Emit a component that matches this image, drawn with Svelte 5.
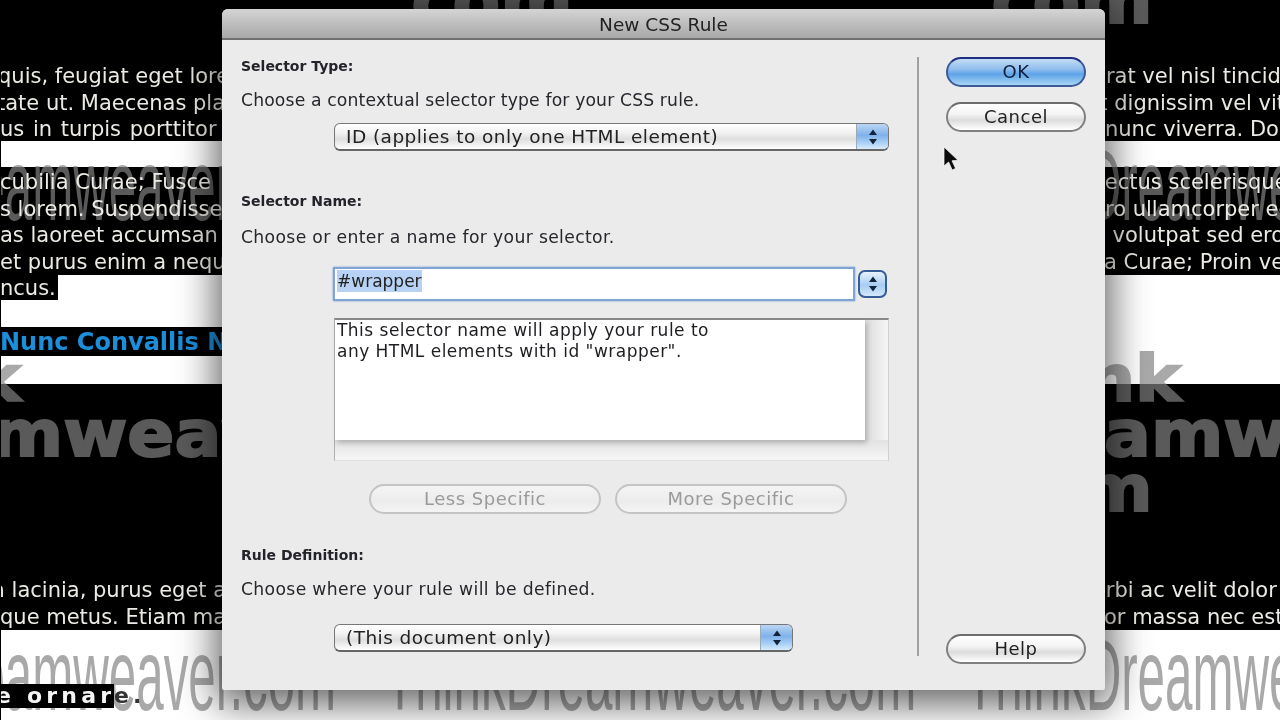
<script>
  const top1 = [
    { l: 'quis, feugiat eget lorem', li: -2, r: 'erat vel nisl tincidunt', rx: 1093 },
    { l: 'tate ut. Maecenas placerat', li: -3, r: 'ut dignissim vel vitae', rx: 1086 },
    { l: 'us in turpis porttitor sed', li: 0, r: 'nunc viverra. Donec', rx: 1105, ws: 2 }
  ];
  const top2 = [
    { l: 'cubilia Curae; Fusce', li: 0, r: 'lectus scelerisque', rx: 1099 },
    { l: 's lorem. Suspendisse', li: 0, r: 'ro ullamcorper eget', rx: 1105 },
    { l: 'as laoreet accumsan', li: 0, r: 'a volutpat sed eros', rx: 1093 },
    { l: 'et purus enim a neque', li: 0, r: 'a Curae; Proin vel', rx: 1104 }
  ];
  const low = [
    { l: 'a lacinia, purus eget ante', li: -8, r: 'orbi ac velit dolor', rx: 1093 },
    { l: 'que metus. Etiam magna', li: 0, r: 'or massa nec est', rx: 1104 }
  ];
  const tiles = [0, 1, 2];
  const thinTiles = [0, 1, 2];
</script>

{#snippet textLine(row)}
  <div class="line">
    <span class="ltext" style:text-indent="{row.li}px" style:word-spacing="{row.ws ?? 0}px">{row.l}</span>
    <span class="rtext" style:left="{row.rx}px">{row.r}</span>
  </div>
{/snippet}

{#snippet chevrons()}
  <svg width="12" height="18" viewBox="0 0 12 18" aria-hidden="true">
    <path d="M6 1.5 L10 7 H2 Z M6 16.5 L10 11 H2 Z" fill="#14233c" />
  </svg>
{/snippet}

{#snippet select(text, cls)}
  <div class="select {cls}">
    <span class="select-text">{text}</span>
    <span class="cap">{@render chevrons()}</span>
  </div>
{/snippet}

<div class="page">
  <section class="band black h141">
    {#each top1 as row}{@render textLine(row)}{/each}
  </section>
  <section class="band white h26"></section>
  <section class="band black lines4">
    {#each top2 as row}{@render textLine(row)}{/each}
  </section>
  <section class="band white h25">
    <span class="mark">ncus.</span>
  </section>
  <section class="band white h27"></section>
  <section class="band white h29">
    <h2 class="heading">Nunc Convallis Nulla</h2>
  </section>
  <section class="band white h28"></section>
  <section class="band black h246">
    <div class="low-text">
      {#each low as row}{@render textLine(row)}{/each}
    </div>
  </section>
  <section class="band white rest">
    <span class="ornare"><span class="ornare-hl">e ornar</span>e.</span>
  </section>

  <div class="wm bold wm-top">
    {#each tiles as t}<div class="tile"><div>.com</div></div>{/each}
  </div>
  <div class="wm bold wm-mid">
    {#each tiles as t}<div class="tile"><div>Think</div><div>Dreamweaver</div><div>.com</div></div>{/each}
  </div>
  <div class="wm thin wm-a">
    {#each thinTiles as t}<span class="thin-tile">ThinkDreamweaver.com</span>{/each}
  </div>
  <div class="wm thin wm-b">
    {#each thinTiles as t}<span class="thin-tile">ThinkDreamweaver.com</span>{/each}
  </div>

  <div class="dialog">
    <header class="title">New CSS Rule</header>
    <div class="body">
      <div class="main">
        <h3 class="label first">Selector Type:</h3>
        <p class="hint h1">Choose a contextual selector type for your CSS rule.</p>
        <div class="indent">
          {@render select('ID (applies to only one HTML element)', 'wide')}
        </div>

        <h3 class="label second">Selector Name:</h3>
        <p class="hint h2b">Choose or enter a name for your selector.</p>
        <div class="indent combo">
          <div class="input"><span class="sel">#wrapper</span></div>
          <div class="spin">{@render chevrons()}</div>
        </div>

        <div class="indent">
          <div class="desc">
            <div class="desc-top">
              <div class="desc-text">This selector name will apply your rule to<br />any HTML elements with id "wrapper".</div>
              <div class="track"></div>
            </div>
            <div class="hbar"></div>
          </div>
        </div>

        <div class="spec">
          <div class="btn disabled">Less Specific</div>
          <div class="btn disabled">More Specific</div>
        </div>

        <h3 class="label third">Rule Definition:</h3>
        <p class="hint h3b">Choose where your rule will be defined.</p>
        <div class="indent">
          {@render select('(This document only)', 'narrow')}
        </div>
      </div>

      <div class="side">
        <div class="btn primary">OK</div>
        <div class="btn cancel">Cancel</div>
        <div class="btn help">Help</div>
      </div>
    </div>
  </div>

  <svg class="cursor" width="22" height="30" viewBox="0 0 22 30" aria-hidden="true">
    <path d="M3 2 L3 21 L7.6 17 L11.2 25 L14.6 23.4 L11 15.8 L17 15.2 Z" fill="#0c0c0c" stroke="#fff" stroke-width="1" stroke-opacity=".7" />
  </svg>
</div>

<style>
  :global(body) { margin: 0; background: #000; }
  .page {
    position: relative;
    width: 1280px;
    height: 720px;
    overflow: hidden;
    font-family: "DejaVu Sans", sans-serif;
    background: #fff;
    filter: blur(.4px);
  }
  .page::before {
    content: "";
    position: absolute;
    left: 0; top: 0; bottom: 0;
    width: 1px;
    background: #000;
    z-index: 4;
  }
  .band { width: 100%; box-sizing: border-box; }
  .black { background: #000; }
  .white { background: #fff; }
  .h141 { height: 141px; padding-top: 63px; }
  .h26 { height: 26px; }
  .lines4 { height: 108px; padding-top: 2px; }
  .h25 { height: 25px; }
  .h27 { height: 27px; }
  .h29 { height: 29px; }
  .h28 { height: 28px; }
  .h246 { height: 246px; display: flex; flex-direction: column; justify-content: flex-end; }
  .rest { height: 90px; padding-top: 54px; }

  .line {
    position: relative;
    height: 26.5px;
    line-height: 27.5px;
    font-size: 21px;
    color: #eceae4;
    white-space: nowrap;
  }
  .ltext, .rtext { position: relative; z-index: 2; }
  .ltext { display: block; width: 240px; overflow: hidden; }
  .rtext { position: absolute; top: 0; }
  .mark {
    display: inline-block;
    position: relative;
    z-index: 2;
    background: #000;
    color: #eceae4;
    height: 25px;
    line-height: 26px;
    font-size: 21px;
    width: 58px;
    overflow: hidden;
  }
  .heading {
    margin: 0;
    height: 29px;
    line-height: 30px;
    width: 300px;
    background: #000;
    color: #1b8fdc;
    font-size: 24px;
    font-weight: 700;
    white-space: nowrap;
    position: relative;
    z-index: 2;
  }
  .ornare {
    position: relative;
    z-index: 2;
    display: block;
    width: 150px;
    height: 24px;
    line-height: 24px;
    font-size: 22px;
    font-weight: 700;
    letter-spacing: 4.2px;
    color: #333;
    white-space: nowrap;
  }
  .ornare-hl { display: inline-block; background: #000; color: #f4f4f4; width: 114px; overflow: hidden; text-indent: -4px; vertical-align: top; }

  .wm { position: absolute; z-index: 1; white-space: nowrap; color: #838383; opacity: .69; }
  .bold {
    display: flex;
    left: -195px;
    font-weight: 700;
    font-size: 64px;
    line-height: 55px;
    -webkit-text-stroke: 2px #838383;
    transform: scaleX(1.085);
    transform-origin: 0 0;
  }
  .tile { flex: 0 0 534.6px; }
  .wm-top { top: -26px; }
  .wm-mid { top: 352px; }
  .thin {
    left: -195px;
    font-family: "Liberation Sans", sans-serif;
    font-size: 102px;
    line-height: 102px;
    transform: scaleX(.483);
    transform-origin: 0 0;
    display: flex;
  }
  .thin-tile { flex: 0 0 1201px; }
  .wm-a { top: 134px; }
  .wm-b { top: 624px; }

  .dialog {
    position: absolute;
    z-index: 3;
    left: 222px;
    top: 9px;
    width: 883px;
    height: 681px;
    background: #ebebeb;
    border-radius: 6px 6px 2px 2px;
    box-shadow: 0 8px 38px 6px rgba(0, 0, 0, .62);
    display: flex;
    flex-direction: column;
    color: #1d1d22;
  }
  .title {
    height: 29px;
    line-height: 31px;
    text-align: center;
    font-size: 18.5px;
    color: #222;
    border-radius: 6px 6px 0 0;
    background: linear-gradient(#d4d4d4, #a8a8a8);
    border-bottom: 2px solid #6f6f6f;
    flex: none;
  }
  .body { flex: 1; display: flex; min-height: 0; }
  .main { width: 695px; box-sizing: border-box; padding: 0 0 0 19px; flex: none; }
  .label { margin: 0; font-size: 14px; font-weight: 700; line-height: 18px; color: #23232a; }
  .hint { margin: 0; font-size: 17.2px; line-height: 20px; color: #26262c; letter-spacing: .15px; }
  .first { padding-top: 17px; }
  .h1 { margin-top: 15px; }
  .second { margin-top: 41px; }
  .h2b { margin-top: 17px; letter-spacing: .35px; }
  .third { margin-top: 32px; }
  .h3b { margin-top: 15px; letter-spacing: .35px; }
  .indent { margin-left: 93px; }
  .first + .h1 + .indent { margin-top: 13px; }
  .h2b + .indent { margin-top: 20px; }
  .h3b + .indent { margin-top: 25px; }

  .select {
    position: relative;
    height: 28px;
    box-sizing: border-box;
    border: 1px solid #777;
    border-bottom: 2px solid #666;
    border-radius: 6px;
    background: linear-gradient(#fff 0%, #f2f2f2 35%, #dedede 60%, #fff 100%);
    display: flex;
    align-items: center;
    justify-content: space-between;
    overflow: hidden;
  }
  .wide { width: 555px; }
  .narrow { width: 459px; }
  .select-text { padding-left: 11px; font-size: 18.5px; letter-spacing: .45px; color: #222; white-space: nowrap; }
  .cap {
    width: 32px;
    height: 100%;
    flex: none;
    display: flex;
    align-items: center;
    justify-content: center;
    background: linear-gradient(#bcd6f3 0%, #7fb1ea 45%, #a9d0f6 75%, #d8ecfc 100%);
    border-left: 1px solid #9ab;
    box-sizing: border-box;
  }
  .combo { display: flex; align-items: center; margin-left: 92px; }
  .input {
    width: 522px;
    height: 34px;
    box-sizing: border-box;
    border: 2px solid #7fa3d2;
    box-shadow: 0 0 2px #7fa3d2;
    background: #fff;
    padding: 1px 2px;
    font-size: 17px;
    line-height: 22px;
    color: #222;
  }
  .sel { background: #b7d2f4; display: inline-block; }
  .spin {
    width: 29px;
    height: 28px;
    margin-left: 3px;
    box-sizing: border-box;
    border: 2px solid #345c96;
    border-radius: 7px;
    background: linear-gradient(#e8f2fc, #a8cdf2 55%, #d4e8fb);
    display: flex;
    align-items: center;
    justify-content: center;
  }
  .desc {
    margin-top: 17px;
    width: 555px;
    height: 143px;
    box-sizing: border-box;
    border: 1px solid #b0b0b0;
    border-right-color: #d0d0d0;
    border-top: 2px solid #8a8a8a;
    border-bottom-color: #e0e0e0;
    background: #f3f3f3;
    display: flex;
    flex-direction: column;
  }
  .desc-top { flex: 1; display: flex; min-height: 0; }
  .desc-text {
    width: 530px;
    height: 120px;
    background: #fff;
    padding: 0 0 0 2px;
    box-sizing: border-box;
    font-size: 17px;
    letter-spacing: .48px;
    line-height: 21px;
    color: #1e1e22;
    box-shadow: 2px 3px 5px rgba(0, 0, 0, .22);
    position: relative;
  }
  .track { flex: 1; height: 120px; background: linear-gradient(90deg, #dcdcdc, #f5f5f5); }
  .hbar { height: 20px; background: linear-gradient(#e2e2e2, #f6f6f6); }

  .spec { display: flex; gap: 14px; margin: 23px 0 0 128px; }
  .btn {
    box-sizing: border-box;
    height: 30px;
    border-radius: 15px;
    border: 2px solid #808080;
    border-top-color: #6c6c6c;
    background: linear-gradient(#fff 0%, #f3f3f3 40%, #dcdcdc 62%, #fff 100%);
    text-align: center;
    font-size: 18px;
    letter-spacing: .5px;
    line-height: 26px;
    color: #222;
  }
  .spec .btn { width: 232px; }
  .disabled {
    border: 2px solid #c4c4c4;
    background: linear-gradient(#f4f4f4, #ececec 60%, #f4f4f4);
    color: #9a9a9a;
  }
  .side {
    flex: 1;
    margin: 17px 0 34px 0;
    border-left: 2px solid #a0a0a0;
    padding: 0 0 0 27px;
    display: flex;
    flex-direction: column;
    position: relative;
  }
  .side .btn { width: 140px; }
  .primary {
    border-color: #3c5a96;
    border-top-color: #1e2f80;
    background: linear-gradient(#c4dcf4 0%, #8fbdee 40%, #5ea3e8 58%, #a8d4f6 100%);
    color: #101e3c;
  }
  .cancel { margin-top: 15px; }
  .help { margin-top: auto; margin-bottom: -8px; }

  .cursor { position: absolute; left: 941px; top: 145px; z-index: 5; }
</style>
